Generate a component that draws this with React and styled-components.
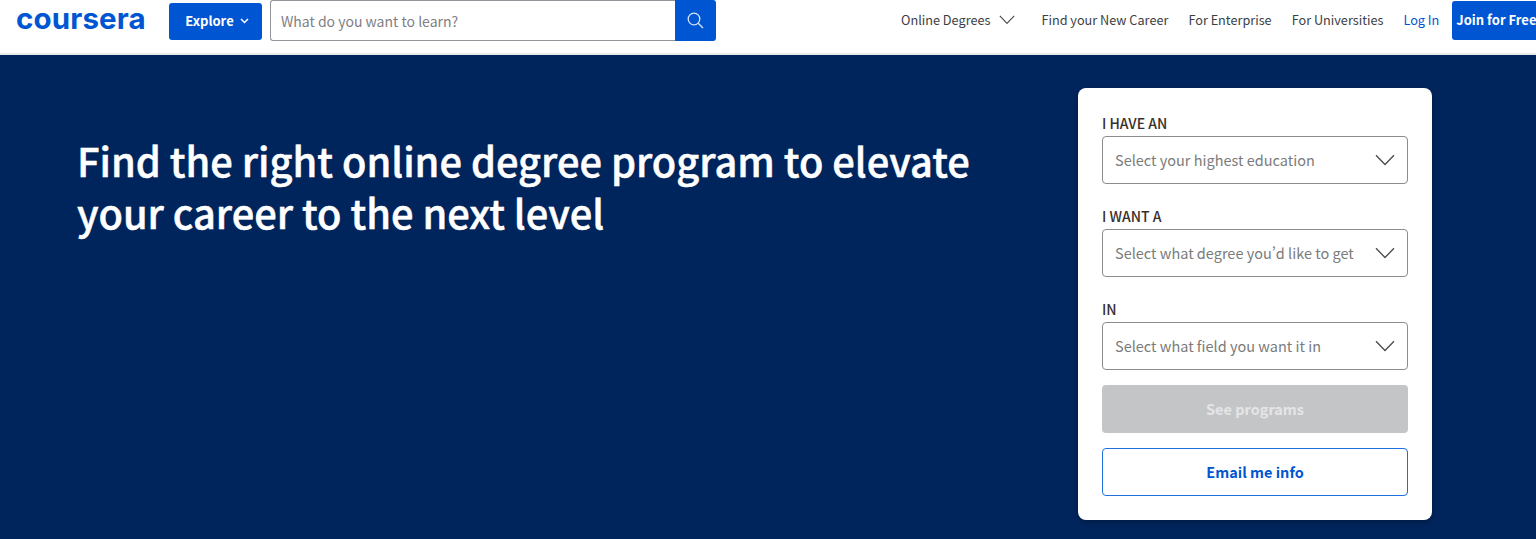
import React from "react";
import styled, { createGlobalStyle } from "styled-components";

const font = `"Noto Sans CJK SC", "Noto Sans", sans-serif`;

const GlobalStyle = createGlobalStyle`
html, body {
    margin: 0;
    padding: 0;
    height: 539px;
    overflow: hidden;
    background: #00255d;
    font-family: ${font};
    font-variant-east-asian: proportional-width;
}
* {
    box-sizing: border-box;
}
`;

const Header = styled.header`
display: flex;
align-items: flex-start;
width: 1536px;
height: 55px;
padding-left: 16px;
background: #fff;
border-bottom: 2px solid #e8eaed;
overflow: hidden;
`;

const Logo = styled.div`
flex: none;
width: 153px;
margin-top: 1px;
font-family: "Inter", sans-serif;
font-size: 29.5px;
line-height: 34px;
font-weight: 700;
letter-spacing: 0.15px;
color: #0056d2;
`;

const ExploreButton = styled.button`
flex: none;
display: flex;
align-items: center;
justify-content: center;
gap: 6px;
width: 93px;
height: 37px;
margin-top: 3px;
padding: 0 0 2px 3px;
border: none;
border-radius: 3px;
background: #0056d2;
color: #fff;
font-family: ${font};
font-size: 13px;
font-weight: 700;
`;

const SearchBox = styled.div`
flex: none;
display: flex;
width: 446px;
height: 41px;
margin-left: 8px;
`;

const SearchField = styled.div`
flex: 1;
display: flex;
align-items: center;
padding: 0 0 0 10px;
border: 1px solid #929599;
border-right: none;
border-radius: 3px 0 0 3px;
color: #7f8083;
font-size: 14px;
`;

const SearchButton = styled.div`
flex: none;
display: flex;
align-items: center;
justify-content: center;
width: 41px;
background: #0056d2;
border-radius: 0 3px 3px 0;
color: #d5e3f7;
`;

const Nav = styled.nav`
flex: none;
display: flex;
align-items: center;
height: 39px;
margin-left: 185px;
`;

const NavLink = styled.a`
flex: none;
margin-right: ${({ $gap }) => $gap || 0}px;
color: ${({ $blue }) => ($blue ? "#0056d2" : "#3c4043")};
font-size: 12.7px;
line-height: 20px;
white-space: nowrap;
`;

const NavChevron = styled.span`
flex: none;
display: flex;
margin: 0 26px 0 9px;
color: #3c4043;
`;

const JoinButton = styled.button`
flex: none;
width: 84px;
height: 39px;
margin-top: 2px;
padding: 0 0 3px 4px;
border: none;
border-radius: 3px 0 0 3px;
text-align: left;
background: #0056d2;
color: #fff;
font-family: ${font};
font-size: 13px;
font-weight: 700;
white-space: nowrap;
overflow: hidden;
`;

const Hero = styled.main`
display: flex;
justify-content: space-between;
align-items: flex-start;
width: 1536px;
height: 484px;
padding: 33px 104px 0 77px;
background: #00255d;
`;

const Title = styled.h1`
flex: none;
margin: 46px 0 0;
color: #fff;
font-size: 39.8px;
line-height: 52px;
font-weight: 500;
-webkit-text-stroke: 0.5px #fff;
white-space: nowrap;
`;

const Card = styled.form`
flex: none;
display: flex;
flex-direction: column;
width: 354px;
height: 432px;
padding: 27px 24px 0;
background: #fff;
border-radius: 8px;
box-shadow: 0 2px 6px rgba(0, 0, 0, 0.3);
`;

const Label = styled.label`
display: block;
height: 21px;
color: #382f2d;
font-size: 14px;
line-height: 17px;
font-weight: 500;
`;

const Select = styled.div`
display: flex;
align-items: center;
justify-content: space-between;
height: 48px;
margin-bottom: 24px;
padding: 0 12px 2px;
border: 1px solid #8c8c8c;
border-radius: 4px;
color: #7b7b7b;
font-size: 14.5px;
white-space: nowrap;
`;

const Button = styled.div`
display: flex;
align-items: center;
justify-content: center;
height: 48px;
padding-bottom: 2px;
border-radius: 4px;
font-size: 14.5px;
font-weight: 700;
`;

const SeeButton = styled(Button)`
margin-top: -9px;
background: #c4c5c7;
color: #e4e5e7;
`;

const EmailButton = styled(Button)`
margin-top: 15px;
border: 1px solid #1f6fdd;
color: #0056d2;
background: #fff;
`;

const Chevron = ({ size = 20, width = 20 }) => (
    <svg width={width} height={size * 0.6} viewBox="0 0 20 12" fill="none" stroke="currentColor" strokeWidth="1.3">
        <path d="M1 1.2 L10 10.5 L19 1.2" />
    </svg>
);

const SelectChevron = styled.span`
display: flex;
margin-top: 2px;
color: #4a4a4a;
`;

const SmallChevron = () => (
    <svg width="9" height="6" viewBox="0 0 9 6" fill="none" stroke="currentColor" strokeWidth="1.5">
        <path d="M1 1 L4.5 4.5 L8 1" />
    </svg>
);

const SearchIcon = () => (
    <svg width="17" height="17" viewBox="0 0 17 17" fill="none" stroke="currentColor" strokeWidth="1.3">
        <circle cx="7" cy="7" r="5.8" />
        <path d="M11.2 11.2 L16 16" />
    </svg>
);

const fields = [
    { label: "I HAVE AN", text: "Select your highest education" },
    { label: "I WANT A", text: "Select what degree you’d like to get" },
    { label: "IN", text: "Select what field you want it in" },
];

const App = () => {
    return (
        <>
            <GlobalStyle />
            <Header>
                <Logo>coursera</Logo>
                <ExploreButton>Explore <SmallChevron /></ExploreButton>
                <SearchBox>
                    <SearchField>What do you want to learn?</SearchField>
                    <SearchButton><SearchIcon /></SearchButton>
                </SearchBox>
                <Nav>
                    <NavLink>Online Degrees</NavLink>
                    <NavChevron><Chevron width={16} size={16} /></NavChevron>
                    <NavLink $gap={20}>Find your New Career</NavLink>
                    <NavLink $gap={20}>For Enterprise</NavLink>
                    <NavLink $gap={20}>For Universities</NavLink>
                    <NavLink $gap={13} $blue>Log In</NavLink>
                    <JoinButton>Join for Free</JoinButton>
                </Nav>
            </Header>
            <Hero>
                <Title>
                    Find the right online degree program to elevate<br />
                    your career to the next level
                </Title>
                <Card>
                    {fields.map((field) => (
                        <div key={field.label}>
                            <Label>{field.label}</Label>
                            <Select>
                                {field.text}
                                <SelectChevron><Chevron /></SelectChevron>
                            </Select>
                        </div>
                    ))}
                    <SeeButton>See programs</SeeButton>
                    <EmailButton>Email me info</EmailButton>
                </Card>
            </Hero>
        </>
    );
};

export default App;
